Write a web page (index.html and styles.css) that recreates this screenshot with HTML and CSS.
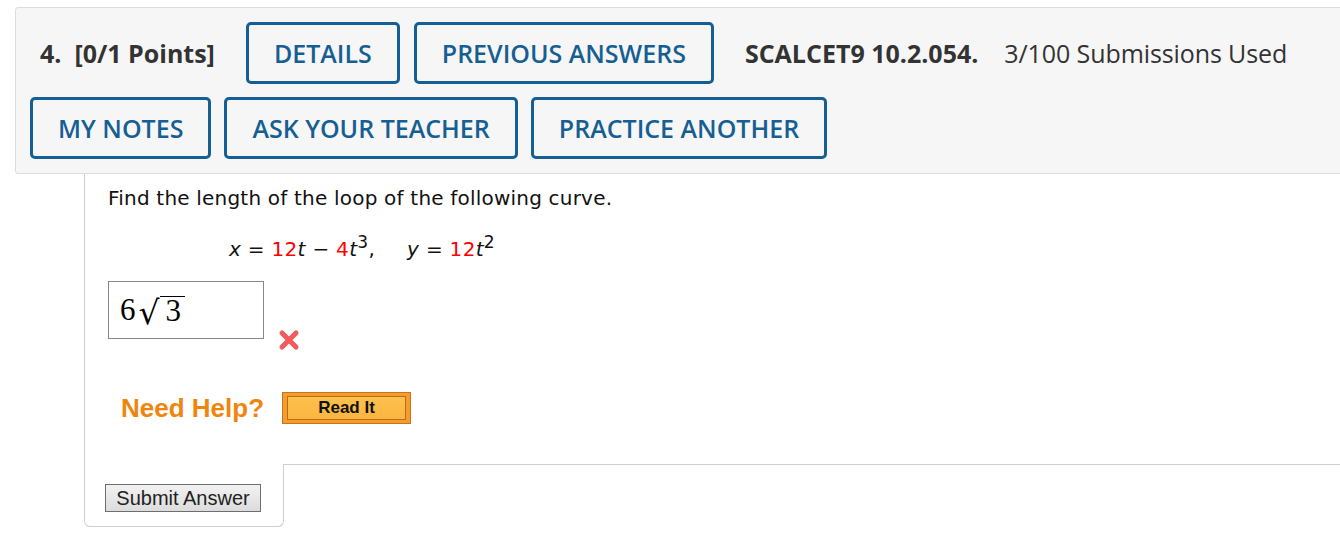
FILE: index.html
```html
<!DOCTYPE html>
<html>
<head>
<meta charset="utf-8">
<link rel="stylesheet" href="styles.css">
</head>
<body>
<div class="header">
  <div class="row row1">
    <span class="qnum">4.&nbsp; [0/1 Points]</span>
    <span class="btn">DETAILS</span>
    <span class="btn">PREVIOUS ANSWERS</span>
    <span class="code">SCALCET9 10.2.054.</span>
    <span class="subs">3/100 Submissions Used</span>
  </div>
  <div class="row row2">
    <span class="btn">MY NOTES</span>
    <span class="btn">ASK YOUR TEACHER</span>
    <span class="btn">PRACTICE ANOTHER</span>
  </div>
</div>
<div class="question">
  <div class="panel">
    <p class="prompt">Find the length of the loop of the following curve.</p>
    <p class="eq"><i>x</i> = <span class="red">12</span><i>t</i> − <span class="red">4</span><i>t</i><sup>3</sup>,<span class="sp"></span><i>y</i> = <span class="red">12</span><i>t</i><sup>2</sup></p>
    <div class="answer-row">
      <div class="answer"><span class="mnum">6</span><span class="rad">√</span><span class="radicand">3</span></div>
      <svg class="wrong" width="22" height="22" viewBox="0 0 22 22"><path d="M4 4 L18 18 M18 4 L4 18" stroke="#f4595e" stroke-width="5" stroke-linecap="round"/></svg>
    </div>
    <div class="help">
      <span class="need">Need Help?</span>
      <span class="readit"><span class="readit-in">Read It</span></span>
    </div>
  </div>
  <div class="bottom">
    <div class="tab"><span class="submit">Submit Answer</span></div>
    <div class="filler"></div>
  </div>
</div>
</body>
</html>
```
FILE: styles.css
```css
html, body {
  margin: 0;
  padding: 0;
  background: #fff;
  overflow: hidden;
}
.header {
  margin: 7px -30px 0 15px;
  background: #f6f6f6;
  border: 1px solid #dcdcdc;
  border-radius: 3px;
  padding: 14px 0 14px 14px;
  font-family: "Open Sans", sans-serif;
}
.row {
  display: flex;
  align-items: center;
  gap: 13px;
}
.row1 {
  gap: 14px;
  margin-bottom: 13px;
}
.qnum {
  font-weight: 700;
  font-size: 25px;
  color: #333;
  margin-left: 10px;
  margin-right: 17px;
}
.btn {
  display: inline-flex;
  align-items: center;
  height: 56px;
  padding: 0 25px;
  border: 3px solid #165f94;
  border-radius: 5px;
  color: #165f94;
  font-size: 25px;
  font-weight: 600;
  background: #f6f6f6;
  white-space: nowrap;
}
.code {
  font-weight: 700;
  font-size: 25px;
  color: #333;
  margin-left: 17px;
}
.subs {
  font-size: 25px;
  color: #333;
  margin-left: 12px;
  letter-spacing: -0.1px;
}
.question {
  margin-left: 84px;
  font-family: "DejaVu Sans", Verdana, sans-serif;
}
.panel {
  border-left: 1px solid #cfcfcf;
  padding: 11px 0 0 23px;
  height: 279px;
}
.prompt {
  margin: 0;
  font-size: 20px;
  letter-spacing: 0.2px;
  color: #111;
  line-height: 26px;
}
.eq {
  margin: 25px 0 0 121px;
  font-size: 20px;
  letter-spacing: 0.3px;
  line-height: 26px;
  color: #111;
}
.eq sup {
  font-size: 17px;
  line-height: 0;
}
.red { color: #f00; }
.sp { display: inline-block; width: 32px; }
.answer-row {
  display: flex;
  align-items: flex-end;
  margin-top: 19px;
}
.answer {
  border: 1px solid #888;
  display: flex;
  align-items: center;
  padding-left: 11px;
  box-sizing: border-box;
  width: 156px;
  height: 58px;
  font-family: "Liberation Serif", serif;
  font-size: 31px;
  color: #000;
}
.rad {
  font-family: "DejaVu Serif", serif;
  font-size: 33px;
  margin-left: 3px;
  position: relative;
  top: 2px;
}
.radicand {
  border-top: 1.5px solid #000;
  padding: 0 4px 0 6px;
  line-height: 28px;
  margin-top: 1px;
}
.wrong {
  margin: 0 0 -12px 14px;
}
.help {
  display: flex;
  align-items: center;
  margin: 53px 0 0 13px;
}
.need {
  font-family: "Liberation Sans", Arial, sans-serif;
  font-weight: 700;
  font-size: 26px;
  color: #f0850e;
}
.readit {
  margin-left: 18px;
  width: 129px;
  height: 32px;
  box-sizing: border-box;
  border: 1px solid #c27420;
  background: #f99b2b;
  padding: 3px 4px;
  display: flex;
}
.readit-in {
  flex: 1;
  border: 1px solid #b06f1e;
  background: linear-gradient(#fec04d, #fbb540);
  font-family: "Liberation Sans", Arial, sans-serif;
  font-weight: 700;
  font-size: 17px;
  color: #111;
  display: flex;
  align-items: center;
  justify-content: center;
}
.bottom {
  display: flex;
  align-items: flex-start;
}
.tab {
  width: 200px;
  height: 63px;
  border: 1px solid #cfcfcf;
  border-top: none;
  border-radius: 0 0 6px 6px;
  padding: 20px 0 0 20px;
  box-sizing: border-box;
}
.filler {
  flex: 1;
  border-top: 1px solid #cfcfcf;
}
.submit {
  display: inline-block;
  width: 156px;
  height: 28px;
  box-sizing: border-box;
  border: 1px solid #6e6e6e;
  background: linear-gradient(#f2f2f2, #dcdcdc);
  font-family: "Liberation Sans", Arial, sans-serif;
  font-size: 20px;
  line-height: 26px;
  color: #222;
  text-align: center;
}
```
